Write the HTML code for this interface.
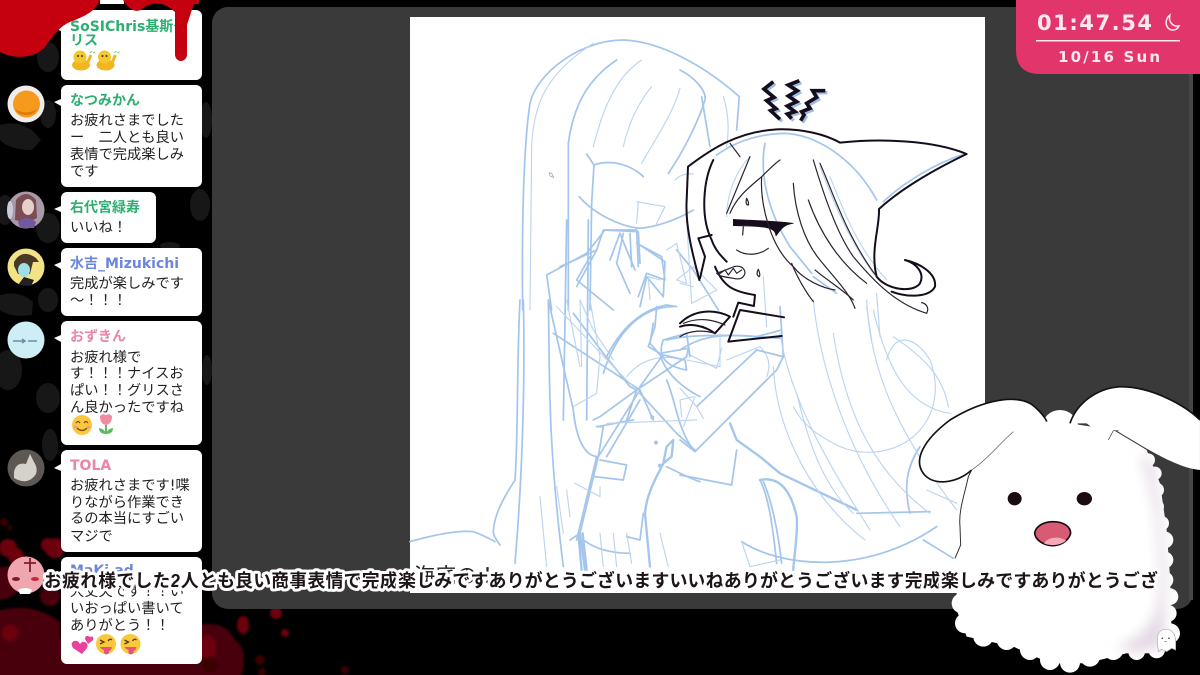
<!DOCTYPE html>
<html><head><meta charset="utf-8"><style>
html,body{margin:0;padding:0;background:#000;width:1200px;height:675px;overflow:hidden}
svg{display:block}
.m{font-family:"DejaVu Sans","Noto Sans CJK JP",sans-serif;font-size:14.25px;fill:#222}
.n{font-family:"DejaVu Sans","Noto Sans CJK JP",sans-serif;font-size:14px;font-weight:700}
.g{fill:#2bb070}.b{fill:#6c86dd}.p{fill:#ea86a4}
.s1 path{fill:none;stroke:#a4c6ec;stroke-width:5.2;stroke-linecap:round;stroke-linejoin:round}
.s2 path{fill:none;stroke:#bcd4f0;stroke-width:3.4;stroke-linecap:round;stroke-linejoin:round}
.k path{fill:none;stroke:#16101a;stroke-width:6;stroke-linecap:round;stroke-linejoin:round}
.t path{fill:none;stroke:#2a2430;stroke-width:3.6;stroke-linecap:round;stroke-linejoin:round}
</style></head><body>
<svg width="1200" height="675" viewBox="0 0 1200 675" xmlns="http://www.w3.org/2000/svg">
<defs>
<filter id="bf" x="-50%" y="-50%" width="200%" height="200%"><feGaussianBlur stdDeviation="18"/></filter>
<filter id="sf"><feGaussianBlur stdDeviation="0.35"/></filter>
<filter id="rb"><feGaussianBlur stdDeviation="1"/></filter>
<clipPath id="bc">
<path d="M215 300L190 440L190 540L170 590L170 720L200 800L340 830L450 880L560 880L680 850L780 850L815 790L810 620L800 480L780 340L740 240L640 180L510 160L440 155L300 200Z"/>
<circle cx="795" cy="630" r="25"/><circle cx="795" cy="570" r="25"/><circle cx="795" cy="510" r="25"/><circle cx="785" cy="460" r="22"/><circle cx="770" cy="410" r="22"/><circle cx="770" cy="360" r="22"/><circle cx="765" cy="310" r="20"/><circle cx="745" cy="270" r="20"/><circle cx="810" cy="790" r="30"/><circle cx="805" cy="730" r="25"/><circle cx="810" cy="680" r="25"/><circle cx="770" cy="840" r="25"/><circle cx="710" cy="845" r="25"/><circle cx="640" cy="840" r="30"/>
</clipPath>
</defs>
<rect width="1200" height="675" fill="#000"/>

<!-- background ghosts -->
<g fill="#171717">
<ellipse cx="48" cy="57" rx="11" ry="15"/>
<path d="M0 125 Q15 120 32 130 L41 140 L32 150 Q10 150 0 140Z"/>
<ellipse cx="48" cy="114" rx="8" ry="14"/>
<ellipse cx="200" cy="205" rx="10" ry="16"/>
<ellipse cx="48" cy="228" rx="12" ry="15"/>
<ellipse cx="5" cy="210" rx="9" ry="15"/>
<path d="M0 295 Q20 290 33 302 L32 315 Q10 318 0 310Z"/>
<ellipse cx="48" cy="300" rx="10" ry="12"/>
<ellipse cx="8" cy="370" rx="14" ry="20"/>
<ellipse cx="48" cy="398" rx="12" ry="15"/>
<ellipse cx="50" cy="445" rx="8" ry="16"/>
<ellipse cx="206" cy="120" rx="6" ry="18"/>
<ellipse cx="207" cy="370" rx="5" ry="15"/>
<ellipse cx="170" cy="246" rx="10" ry="4"/>
</g>
<!-- blood splatter -->
<g filter="url(#rb)">
<g fill="#4a0008">
<path d="M-5 612Q30 600 60 622L62 680L-5 680Z"/>
<rect x="55" y="640" width="150" height="40"/>
<path d="M200 625Q225 620 235 640Q250 650 240 680L200 680Z"/>
<path d="M-5 570Q15 560 25 575Q20 600 -5 600Z"/>
<circle cx="50" cy="596" r="10"/>
</g>
<g fill="#6c0010">
<circle cx="55" cy="548" r="10"/><circle cx="48" cy="545" r="7"/><circle cx="8" cy="548" r="9"/><circle cx="16" cy="556" r="8"/>
<ellipse cx="243" cy="625" rx="6" ry="9"/><circle cx="276" cy="613" r="6"/><circle cx="285" cy="633" r="4"/><ellipse cx="208" cy="648" rx="8" ry="13"/>
<circle cx="10" cy="633" r="8"/>
</g>
<g fill="#3a0006"><circle cx="4" cy="522" r="4"/><circle cx="10" cy="528" r="2.500"/><circle cx="345" cy="670" r="4"/><circle cx="260" cy="660" r="5"/><circle cx="262" cy="672" r="4"/><circle cx="210" cy="665" r="8"/></g>
</g>

<!-- panel -->
<rect x="212" y="7" width="981" height="602" rx="16" fill="#3a3a3a"/>
<rect x="1189" y="10" width="4" height="590" fill="#464646"/>
<rect x="410" y="17" width="575" height="576" fill="#fff"/>

<!-- sketch -->
<g filter="url(#sf)">
<g transform="translate(480 30) scale(.3333)">
<g class="s1">
<path d="M128 840C125 600 130 350 150 220C170 130 300 30 430 30C560 35 700 130 778 200L770 300"/>
<path d="M265 840L265 340C280 230 320 150 410 90"/>
<path d="M600 120C640 140 680 180 675 210C650 290 600 380 565 430"/>
<path d="M320 372L342 405C400 385 460 410 490 440M342 405L335 520L330 840"/>
<path d="M298 500C340 550 420 590 480 595C530 590 590 570 640 540"/>
<path d="M200 735L320 670L375 600L470 600L475 710M200 735L215 840M290 770L350 660M390 690L420 610L440 660L465 720"/>
<path d="M470 640L545 680L555 750L500 730L475 800"/>
<path d="M590 660L640 720L715 840M665 200L690 350"/>
</g>
<g class="s2">
<path d="M150 840L155 350C160 220 200 130 340 40"/>
<path d="M340 350C370 230 410 140 485 90"/>
<path d="M430 350C450 260 490 200 515 170"/>
<path d="M485 400C530 320 580 250 600 175"/>
<path d="M470 515L555 530L525 590M475 515L470 580"/>
<path d="M585 450C600 435 620 430 640 432M730 200C750 260 745 320 740 350"/>
<path d="M560 660L590 640L620 760M600 760L640 770"/>
</g>
<path d="M207 428l8 2 6 12-10-3z" fill="none" stroke="#999" stroke-width="2"/>
</g>

<g transform="translate(560 220) scale(.3333)">
<g class="s1">
<path d="M0 140L110 90L130 30L235 35L240 130M50 180L90 110M50 180L160 270M240 75L315 125L310 230L260 170L240 260"/>
<path d="M130 460C170 330 250 260 340 260M290 260L285 320L265 380L300 400L385 385L380 410L320 450L230 510L210 500L130 400L40 280"/>
<path d="M300 400C310 450 360 500 420 530M500 600L620 480"/>
<path d="M320 360C400 340 560 345 660 355M230 510L120 590L100 600M230 510L200 600M240 510L280 600"/>
<path d="M85 0L80 600M20 0L10 600"/>
<path d="M190 40L170 130L210 220M210 40L215 140"/>
</g>
<g class="s2">
<path d="M380 0L395 250L470 210L400 140L350 180L380 190M380 400L470 445L485 385"/>
<path d="M400 530L360 540L365 590M200 470C240 420 300 400 370 420"/>
<path d="M300 180L265 170L270 240M60 240L100 330L160 420"/>
<path d="M500 420L600 380Q640 420 620 470"/>
</g>
</g>

<g transform="translate(400 300) scale(.3333)">
<g class="s1">
<path d="M360 0C350 200 355 400 345 540C320 580 280 640 280 700C285 715 295 728 300 735M30 725C100 705 170 690 220 695C250 705 275 720 285 725"/>
<path d="M370 0C375 200 370 500 345 790"/>
<path d="M445 0C450 200 440 400 490 800"/>
<path d="M445 0L520 330C530 430 560 470 595 470L720 270"/>
<path d="M460 100L720 270"/>
<path d="M620 170C660 90 720 30 800 15L830 20"/>
<path d="M760 70L750 130L785 170L720 260"/>
<path d="M590 380L610 380L595 470L540 700L510 720"/>
<path d="M600 480L680 495L670 540L585 530"/>
<path d="M540 700L555 810M548 700L560 810M535 700L545 810" style="stroke-width:7"/>
<path d="M550 720C590 750 640 760 690 760"/>
<path d="M750 800L735 640C740 580 770 530 790 490L800 440L820 420L815 470L790 490" style="stroke-width:7"/>
<path d="M790 120C770 170 800 200 860 210L855 180L790 165M790 120L860 100L870 170"/>
<path d="M800 240C830 310 830 380 880 450"/>
<path d="M720 280L830 400L885 450M720 300L620 470M700 360C640 370 600 380 590 380"/>
<path d="M800 500C840 520 880 540 900 545"/>
<path d="M680 710L720 720L730 640"/>
<path d="M530 720L590 470"/>
</g>
<g class="s2">
<path d="M420 590L440 800M470 560L490 700M500 570L510 650"/>
<path d="M500 0L540 200M540 0L545 200M570 0L600 170L590 280"/>
<path d="M470 20L640 200L700 260"/>
<path d="M620 370L890 360"/>
<path d="M520 320L590 280M525 550L600 590L600 560"/>
<path d="M600 700L610 800M640 700L650 800M680 700L695 790M780 700L805 800"/>
</g>
<g fill="#a4c6ec"><circle cx="757" cy="352" r="6"/><circle cx="768" cy="428" r="6"/><circle cx="780" cy="497" r="6"/></g>
</g>

<g transform="translate(680 300) scale(.3333)">
<g class="s1">
<path d="M150 370L170 420L240 470L300 520L530 630" style="stroke-width:7"/>
<path d="M240 540C290 530 330 560 350 650C355 700 340 780 340 810" style="stroke-width:7"/>
<path d="M240 540C270 600 280 700 290 790M250 545C275 600 295 700 305 790"/>
<path d="M185 725C300 800 550 830 770 680"/>
<path d="M730 720L820 775"/>
<path d="M690 640C670 560 680 500 720 440"/>
<path d="M530 640L750 635"/>
<path d="M50 320L230 150L310 170L300 20M170 450L155 555L0 525"/>
<path d="M0 420L45 455L290 210L310 170"/>
<path d="M0 150C60 110 120 100 230 110L305 90"/>
</g>
<g class="s2">
<path d="M300 100C330 300 450 500 570 690"/>
<path d="M460 100C490 300 560 500 750 640"/>
<path d="M280 200C290 400 400 600 555 720"/>
<path d="M400 0C420 200 500 450 660 680"/>
<path d="M620 180C640 100 700 100 750 180C780 260 770 350 700 410C640 460 550 470 480 440C420 410 370 380 340 320"/>
<path d="M580 30C620 200 680 320 810 340"/>
<path d="M640 110C730 170 790 230 805 320"/>
<path d="M560 0C570 200 640 380 830 630"/>
<path d="M350 280C380 400 420 550 520 640"/>
<path d="M0 265L50 320L70 355M45 290L10 380"/>
<path d="M185 725L210 800L300 780"/>
<path d="M120 100L120 200L20 180"/>
<path d="M740 570L830 610"/>
</g>
</g>

<!-- black line art -->
<g transform="translate(680 60) scale(.3333)">
<g class="s1">
<path d="M110 285C180 235 250 222 310 220C400 220 520 290 590 420" />
<path d="M610 425C680 360 770 310 850 283"/>
<path d="M255 250C240 330 255 440 330 560L395 640M400 650L470 700"/>
</g>
<g class="s2">
<path d="M210 290C170 330 140 400 140 470"/>
<path d="M420 320C460 420 500 530 580 640M450 350C490 450 530 560 620 660"/>
<path d="M250 650L260 800M590 700L600 830M560 740L575 840"/>
</g>
<g class="k">
<path d="M58 660C40 590 15 500 20 420L24 320C90 270 170 215 290 208C370 205 440 225 480 248C600 235 760 240 860 282C780 320 670 380 597 447C600 500 570 570 590 650C620 690 700 700 720 670C735 640 710 610 675 600C720 610 770 640 765 680C750 710 690 715 635 695"/>
<path d="M100 300C70 360 60 470 95 540C105 570 125 590 140 605"/>
<path d="M55 535L95 525M55 535L75 590L60 655"/>
<path d="M105 620C130 680 160 695 225 705L222 735"/>
<path d="M0 790C40 750 100 745 150 770L105 820C70 795 30 790 0 800"/>
<path d="M160 770L175 728L222 738M180 750L312 772M180 750L145 845L305 828"/>
<path d="M160 478C220 482 280 482 340 490C310 495 305 505 288 528C285 505 270 498 160 497Z" style="fill:#16101a;stroke-width:2"/>
</g>
<g class="t">
<path d="M245 350C240 430 270 560 340 620C370 660 430 685 465 690"/>
<path d="M245 350C210 380 170 410 150 460M245 350C265 330 285 310 300 300"/>
<path d="M340 370C345 450 370 540 420 600C460 650 510 700 525 745"/>
<path d="M400 300C430 400 470 520 520 590C570 650 640 730 740 760C750 740 735 730 725 728"/>
<path d="M335 610C350 650 380 700 400 725M405 630C440 660 490 690 520 720"/>
<path d="M385 420C420 520 480 610 560 670M170 570C200 590 240 585 265 565"/>
<path d="M420 310C460 400 500 530 590 650"/>
<path d="M110 640L150 625C180 610 195 625 195 640C190 655 180 660 160 655C130 650 120 650 110 640M118 642L135 630L145 645L160 625L170 640L185 630"/>
<path d="M190 500L188 525M200 415Q208 430 205 435Q195 435 200 415M235 628Q242 645 238 650Q226 645 235 628"/>
<path d="M10 790C60 770 100 780 135 795M0 830C30 810 70 810 105 820"/>
<path d="M150 250L180 290M210 290L140 460"/>
</g>
<g fill="none" stroke="#9dbde6" stroke-width="10" stroke-linejoin="miter" transform="translate(6 6)">
<path d="M280 65L252 87L282 112L260 122L288 146L272 152L300 178"/>
<path d="M358 62L325 75L352 92L325 108L350 125L322 138L345 155L322 162L335 176"/>
<path d="M436 92L398 92L410 112L380 130L390 145L365 155L372 165L362 182"/>
</g>
<g fill="none" stroke="#16101a" stroke-width="11" stroke-linejoin="miter">
<path d="M280 65L252 87L282 112L260 122L288 146L272 152L300 178"/>
<path d="M358 62L325 75L352 92L325 108L350 125L322 138L345 155L322 162L335 176"/>
<path d="M436 92L398 92L410 112L380 130L390 145L365 155L372 165L362 182"/>
</g>
</g>
</g>

<!-- handwritten under subtitle -->
<text x="414" y="583" font-family="Liberation Sans,Noto Sans CJK JP,sans-serif" font-size="21" fill="#222">海底の！</text>

<!-- chat bubbles -->
<g fill="#fff">
<rect x="61" y="10" width="141" height="70" rx="6"/><path d="M61 24L54 28L61 31Z"/>
<rect x="61" y="85" width="141" height="102" rx="6"/><path d="M61 99L54 102L61 106Z"/>
<rect x="61" y="192" width="95" height="51" rx="6"/><path d="M61 206L54 209L61 212Z"/>
<rect x="61" y="248" width="141" height="68" rx="6"/><path d="M61 262L54 265L61 269Z"/>
<rect x="61" y="321" width="141" height="124" rx="6"/><path d="M61 335L54 338L61 342Z"/>
<rect x="61" y="450" width="141" height="102" rx="6"/><path d="M61 464L54 468L61 471Z"/>
<rect x="61" y="557" width="141" height="107" rx="6"/><path d="M61 571L54 574L61 578Z"/>
<rect x="100" y="0" width="24" height="4"/>
</g>

<text class="n g" x="70" y="31">SoSIChris基斯グ</text><text class="n g" x="70" y="45">リス</text>
<text class="n g" x="70" y="105">なつみかん</text>
<text class="m" x="70" y="125">お疲れさまでした</text><text class="m" x="70" y="142">ー　二人とも良い</text><text class="m" x="70" y="159">表情で完成楽しみ</text><text class="m" x="70" y="176">です</text>
<text class="n g" x="70" y="212">右代宮緑寿</text><text class="m" x="70" y="232">いいね！</text>
<text class="n b" x="70" y="268">水吉_Mizukichi</text><text class="m" x="70" y="288">完成が楽しみです</text><text class="m" x="70" y="305">〜！！！</text>
<text class="n p" x="70" y="341">おずきん</text>
<text class="m" x="70" y="362">お疲れ様で</text><text class="m" x="70" y="378">す！！！ナイスお</text><text class="m" x="70" y="395">ぱい！！グリスさ</text><text class="m" x="70" y="412">ん良かったですね</text>
<text class="n p" x="70" y="470">TOLA</text>
<text class="m" x="70" y="490">お疲れさまです!喋</text><text class="m" x="70" y="507">りながら作業でき</text><text class="m" x="70" y="523">るの本当にすごい</text><text class="m" x="70" y="541">マジで</text>
<text class="n b" x="70" y="575">MaKi.ad</text>
<text class="m" x="70" y="596">大丈夫です！！い</text><text class="m" x="70" y="613">いおっぱい書いて</text><text class="m" x="70" y="630">ありがとう！！</text>

<!-- emoji -->
<g><ellipse cx="81" cy="65" rx="9" ry="5.5" fill="#f2b51f"/><circle cx="80" cy="57" r="6.5" fill="#f6c72c"/><circle cx="78" cy="56" r="1" fill="#333"/><circle cx="82" cy="56" r="1" fill="#333"/><path d="M88 62L91 55" stroke="#f2b51f" stroke-width="3"/><path d="M90 53l2-2m1 2l2-1" stroke="#7cc66a" stroke-width="1"/></g>
<g transform="translate(24.500 0)"><ellipse cx="81" cy="65" rx="9" ry="5.5" fill="#f2b51f"/><circle cx="80" cy="57" r="6.5" fill="#f6c72c"/><circle cx="78" cy="56" r="1" fill="#333"/><circle cx="82" cy="56" r="1" fill="#333"/><path d="M88 62L91 55" stroke="#f2b51f" stroke-width="3"/><path d="M90 53l2-2m1 2l2-1" stroke="#7cc66a" stroke-width="1"/></g>
<circle cx="82" cy="425" r="10" fill="#f9c93b"/><path d="M76 423q2-3 4 0M84 423q2-3 4 0M77 428q5 5 10 0" fill="none" stroke="#7a4a10" stroke-width="1.300"/><ellipse cx="75.500" cy="427" rx="2" ry="1.300" fill="#f59a8a"/><ellipse cx="88.500" cy="427" rx="2" ry="1.300" fill="#f59a8a"/>
<path d="M100 416q3-2 3-2q3 1 3 1q3-1 3-1q3 2 3 2q0 8-6 9q-6-1-6-9Z" fill="#f28aa2"/><path d="M106 425v9" stroke="#62b860" stroke-width="2"/><path d="M106 434q-7 0-7-6q6 1 7 6q1-5 7-6q0 6-7 6Z" fill="#62b860"/>
<path d="M82 654l-9-6q-3-5 1-7q4-1 6 3q2-3 5-2q4 2 2 6Z" fill="#e8439c"/><path d="M88 644l-3-5q0-3 2-3q2 0 3 1q2-1 3 0q1 3-1 4Z" fill="#e8439c"/>
<g><circle cx="106" cy="644" r="10" fill="#f9c93b"/><path d="M100 640l4 2-4 2M112 640q-2-2-4 1" fill="none" stroke="#5a3a10" stroke-width="1.300"/><path d="M100 647h12q-1 4-3 4v2q-3 3-5 0v-3q-3-1-4-3Z" fill="#e8537a"/></g>
<g transform="translate(24.500 0)"><circle cx="106" cy="644" r="10" fill="#f9c93b"/><path d="M100 640l4 2-4 2M112 640q-2-2-4 1" fill="none" stroke="#5a3a10" stroke-width="1.300"/><path d="M100 647h12q-1 4-3 4v2q-3 3-5 0v-3q-3-1-4-3Z" fill="#e8537a"/></g>

<!-- avatars -->
<circle cx="26" cy="104" r="18.500" fill="#f2ede8"/><circle cx="26.500" cy="104" r="13.500" fill="#f59a1c"/><path d="M15 109q11 7 22 0q-3 6-11 6q-8 0-11-6Z" fill="#d97a10"/>
<circle cx="26" cy="210" r="18.500" fill="#a89aa8"/><path d="M16 200q10-12 20 0l1 18q-10 6-22 2Z" fill="#7b4c52"/><ellipse cx="28" cy="207" rx="6" ry="8" fill="#e7d0cc"/><path d="M18 222q8-8 18 0l-2 6h-14Z" fill="#7258a2"/><ellipse cx="10" cy="210" rx="3" ry="9" fill="#c9ccd8"/>
<circle cx="26" cy="267" r="18.500" fill="#f2e386"/><path d="M14 262q8-14 22-4l3 4l-6 0l-3 12h-12l-4-8Z" fill="#4a3a25"/><ellipse cx="24" cy="270" rx="6" ry="7" fill="#9ee0e6"/><path d="M18 285l6-8l10 3l-3 6Z" fill="#222"/>
<circle cx="26" cy="340" r="18.500" fill="#cdeef5"/><path d="M13 341h12M22 339l3 2-3 2M28 341h9" stroke="#6d8ea3" stroke-width="1.500" fill="none"/>
<circle cx="26" cy="468" r="18.500" fill="#5d5853"/><path d="M14 472q2-10 12-8l4-10l4 8q4 6 2 12q-8 12-22 4Z" fill="#d5d2cc"/>
<circle cx="26" cy="575" r="18.500" fill="#f0a6ae"/><path d="M30 558v14M24 563h12" stroke="#7a1e2e" stroke-width="1.800"/><ellipse cx="16" cy="579" rx="4" ry="2" fill="#7a1e2e"/><ellipse cx="35" cy="579" rx="4" ry="2" fill="#c8283a"/><path d="M18 590q8-4 14 0l-2 4h-10Z" fill="#fff"/>

<!-- blood drip -->
<path d="M0 0L0 52C15 60 35 58 45 47C53 36 60 26 70 22C85 16 95 12 100 0L123 0C128 8 135 14 142 9C150 3 160 1 170 8L175 12L175 55C176 63 186 63 187 55L187 25L195 0Z" fill="#c5000f"/>
<rect x="187" y="0" width="12" height="4" fill="#c5000f"/>

<!-- clock -->
<path d="M1016 0H1200V74H1040Q1016 74 1016 50Z" fill="#e2356c"/>
<g font-family="'DejaVu Sans',sans-serif" font-weight="700" fill="#fbe9ef">
<text x="1037" y="30" font-size="21" textLength="115" lengthAdjust="spacing">01:47.54</text>
<text x="1058" y="62" font-size="15" textLength="102" lengthAdjust="spacing">10/16 Sun</text>
</g>
<path d="M1170 15C1164 19 1165 30 1173 30C1176 30 1178 28 1179 26C1173 27 1168 22 1170 15Z" fill="none" stroke="#fbe9ef" stroke-width="1.500"/>
<rect x="1036" y="40" width="144" height="1.500" fill="#fbe9ef"/>

<!-- bunny -->
<g transform="translate(900 370) scale(.3333)">
<path d="M215 300L190 440L190 540L170 590L170 720L200 800L340 830L450 880L560 880L680 850L780 850L815 790L810 620L800 480L780 340L740 240L640 180L510 160L440 155L300 200Z" fill="#fff"/>
<circle cx="480" cy="175" r="55" fill="#fff"/>
<g fill="#fff">
<circle cx="205" cy="345" r="20"/><circle cx="200" cy="400" r="25"/><circle cx="195" cy="460" r="20"/><circle cx="200" cy="520" r="25"/><circle cx="185" cy="575" r="25"/><circle cx="180" cy="640" r="25"/><circle cx="185" cy="700" r="30"/><circle cx="195" cy="760" r="30"/>
<circle cx="250" cy="800" r="30"/><circle cx="320" cy="810" r="30"/><circle cx="390" cy="840" r="30"/><circle cx="450" cy="870" r="30"/><circle cx="510" cy="878" r="30"/><circle cx="570" cy="860" r="30"/><circle cx="640" cy="840" r="30"/><circle cx="710" cy="845" r="25"/><circle cx="770" cy="840" r="25"/>
<circle cx="810" cy="790" r="30"/><circle cx="805" cy="730" r="25"/><circle cx="810" cy="680" r="25"/><circle cx="795" cy="630" r="25"/><circle cx="795" cy="570" r="25"/><circle cx="795" cy="510" r="25"/><circle cx="785" cy="460" r="22"/><circle cx="770" cy="410" r="22"/><circle cx="770" cy="360" r="22"/><circle cx="765" cy="310" r="20"/><circle cx="745" cy="270" r="20"/>
</g>
<g clip-path="url(#bc)"><path d="M715 255C745 310 775 430 780 620C785 720 750 800 650 830L700 850L790 830L800 620L780 400L760 280Z" fill="#e3d9e3" filter="url(#bf)"/></g>
<path d="M215 300C170 340 100 350 70 310C40 270 70 210 150 150C230 100 330 70 390 100C420 120 440 150 440 155" fill="#fff" stroke="#111" stroke-width="5"/>
<path d="M215 300C260 270 300 220 340 185" fill="none" stroke="#555" stroke-width="2"/>
<path d="M215 300L205 320C195 370 175 420 180 470L182 525L165 565" fill="none" stroke="#333" stroke-width="3"/>
<path d="M510 160C530 100 590 55 660 50C760 50 860 110 900 150L900 300C840 295 760 250 650 182L638 182L625 210L560 160Z" fill="#fff"/>
<path d="M510 160C530 100 590 55 660 50C760 50 860 110 900 150" fill="none" stroke="#111" stroke-width="5"/>
<path d="M625 210L640 182L655 182" fill="none" stroke="#333" stroke-width="2"/>
<ellipse cx="344" cy="386" rx="21" ry="20" fill="#1a0c12"/><ellipse cx="553" cy="386" rx="23" ry="20" fill="#1a0c12"/>
<path d="M404 488C410 465 435 455 460 455C490 455 512 470 512 490C505 515 480 527 455 527C430 525 405 510 404 488Z" fill="#d75b72" stroke="#1a0c12" stroke-width="5"/>
<path d="M432 520C445 500 480 498 498 512C480 528 450 528 432 520Z" fill="#f4a9b6"/>
<path d="M772 810C772 785 785 778 798 778C815 778 827 790 827 815L827 840L815 835L800 845L785 838L775 845Z" fill="#fff" stroke="#aaa" stroke-width="2"/>
<circle cx="787" cy="805" r="2.500" fill="#444"/><circle cx="807" cy="805" r="2.500" fill="#444"/><path d="M793 815h8" stroke="#444" stroke-width="1.500"/>
</g>

<!-- subtitle -->
<g font-family="'Liberation Sans','Noto Sans CJK JP',sans-serif" font-size="18" font-weight="700">
<text x="44" y="587" fill="#1d1519" stroke="#fff" stroke-width="6" stroke-linejoin="round" paint-order="stroke" textLength="1114" lengthAdjust="spacing">お疲れ様でした2人とも良い商事表情で完成楽しみですありがとうございますいいねありがとうございます完成楽しみですありがとうござ</text>
</g>
</svg>
</body></html>
